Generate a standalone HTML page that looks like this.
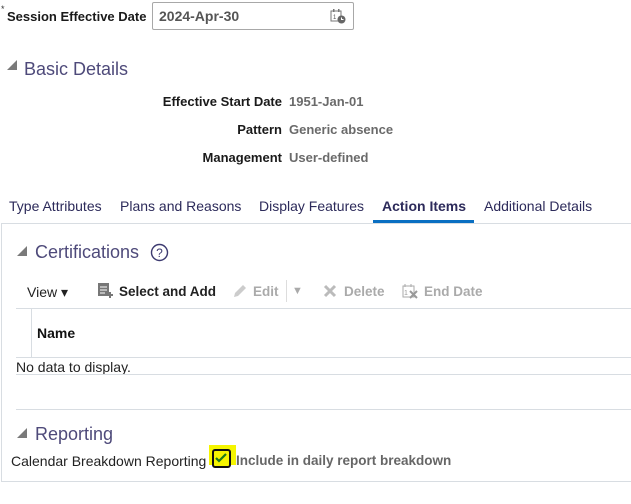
<!DOCTYPE html>
<html><head><meta charset="utf-8"><style>
body{margin:0;width:631px;height:504px;background:#fff;position:relative;overflow:hidden;font-family:"Liberation Sans",sans-serif;}
.a{position:absolute;white-space:nowrap;}
.lab{font-size:13px;font-weight:bold;color:#1a1a1a;}
.val{font-size:13px;font-weight:bold;color:#6a6a6a;}
.h{font-size:18px;color:#4e4a7a;}
.tri{position:absolute;width:0;height:0;border-left:10px solid transparent;border-bottom:10px solid #7a7a7a;}
.tab{font-size:14px;color:#2c2a5a;top:198px;}
.tb{font-size:13.5px;font-weight:bold;top:284px;}
.dis{color:#aaa;}
.line{position:absolute;background:#d8dde2;}
</style></head><body>
<div class="a" style="left:1px;top:4px;font-size:9px;color:#333">*</div>
<div class="a lab" style="left:7px;top:9px;font-size:13px">Session Effective Date</div>
<div class="a" style="left:152px;top:2px;width:200px;height:26px;border:1px solid #a8a8a8;border-radius:2px"></div>
<div class="a" style="left:159px;top:8px;font-size:14px;font-weight:bold;color:#555">2024-Apr-30</div>
<svg class="a" style="left:330px;top:8px" width="16" height="16" viewBox="0 0 16 16"><rect x="1" y="3" width="10" height="10" fill="none" stroke="#777" stroke-width="1"/><rect x="3" y="1" width="1.5" height="3" fill="#777"/><rect x="8" y="1" width="1.5" height="3" fill="#777"/><text x="3" y="11" font-size="6" fill="#555" font-family="Liberation Sans">1</text><circle cx="11.5" cy="11.5" r="4" fill="#666"/><path d="M11.5 9.5v2h2" stroke="#fff" fill="none"/></svg>

<div class="tri" style="left:7px;top:60px"></div>
<div class="a h" style="left:24px;top:59px">Basic Details</div>
<div class="a lab" style="right:349px;top:94px">Effective Start Date</div>
<div class="a val" style="left:289px;top:94px">1951-Jan-01</div>
<div class="a lab" style="right:349px;top:122px">Pattern</div>
<div class="a val" style="left:289px;top:122px">Generic absence</div>
<div class="a lab" style="right:349px;top:150px">Management</div>
<div class="a val" style="left:289px;top:150px">User-defined</div>

<div class="a tab" style="left:9px">Type Attributes</div>
<div class="a tab" style="left:120px">Plans and Reasons</div>
<div class="a tab" style="left:259px">Display Features</div>
<div class="a tab" style="left:382px;font-weight:bold">Action Items</div>
<div class="a tab" style="left:484px">Additional Details</div>
<div class="a" style="left:373px;top:220px;width:101px;height:3px;background:#0a6fc2"></div>
<div class="a" style="left:1px;top:223px;width:640px;height:257px;border:1px solid #d8dde2;border-right:none"></div>

<div class="tri" style="left:17px;top:246px"></div>
<div class="a h" style="left:35px;top:242px">Certifications</div>
<svg class="a" style="left:150px;top:243px" width="19" height="19" viewBox="0 0 19 19"><circle cx="9.5" cy="9.5" r="8" fill="none" stroke="#3c3a70" stroke-width="1.4"/><text x="9.5" y="14" text-anchor="middle" font-size="12" fill="#3c3a70" font-family="Liberation Sans">?</text></svg>

<div class="a tb" style="left:27px;font-weight:normal;color:#222;font-size:14px">View ▾</div>
<svg class="a" style="left:97px;top:282px" width="17" height="17" viewBox="0 0 17 17"><rect x="1" y="1" width="11" height="13" fill="#777"/><path d="M3 5h7M3 8h7M3 11h5" stroke="#fff"/><path d="M13 10v6M10 13h6" stroke="#777" stroke-width="2"/></svg>
<div class="a tb" style="left:119px;color:#222">Select and Add</div>
<svg class="a" style="left:232px;top:283px" width="16" height="16" viewBox="0 0 16 16"><path d="M2 14l1-4 8-8 3 3-8 8z" fill="#ccc"/></svg>
<div class="a tb dis" style="left:253px">Edit</div>
<div class="a" style="left:286px;top:280px;width:1px;height:22px;background:#ddd"></div>
<div class="a dis" style="left:292px;top:285px;font-size:11px">▼</div>
<svg class="a" style="left:322px;top:283px" width="16" height="16" viewBox="0 0 16 16"><path d="M3 3l10 10M13 3L3 13" stroke="#bbb" stroke-width="3"/></svg>
<div class="a tb dis" style="left:344px">Delete</div>
<svg class="a" style="left:402px;top:283px" width="17" height="16" viewBox="0 0 17 16"><rect x="1" y="3" width="11" height="11" fill="none" stroke="#aaa"/><path d="M3 1v3M9 1v3" stroke="#aaa"/><text x="2" y="12" font-size="7" fill="#999" font-family="Liberation Sans">1</text><path d="M8 8l7 7M15 8l-7 7" stroke="#999" stroke-width="2"/></svg>
<div class="a tb dis" style="left:424px">End Date</div>

<div class="line" style="left:16px;top:308px;width:620px;height:1px"></div>
<div class="line" style="left:31px;top:308px;width:1px;height:49px"></div>
<div class="a" style="left:37px;top:325px;font-size:14px;font-weight:bold;color:#111">Name</div>
<div class="line" style="left:16px;top:357px;width:620px;height:1px"></div>
<div class="a" style="left:16px;top:359px;font-size:14px;color:#222">No data to display.</div>
<div class="line" style="left:16px;top:374px;width:620px;height:1px"></div>
<div class="line" style="left:16px;top:409px;width:620px;height:1px"></div>

<div class="tri" style="left:17px;top:428px"></div>
<div class="a h" style="left:35px;top:424px">Reporting</div>
<div class="a" style="left:11px;top:453px;font-size:14px;color:#222">Calendar Breakdown Reporting</div>
<div class="a" style="left:209px;top:445px;width:27px;height:20px;background:#f5f500"></div>
<div class="a" style="left:212px;top:449px;width:15px;height:15px;border:2px solid #111;border-radius:3px;background:#f5f500"></div>
<svg class="a" style="left:214px;top:451px" width="14" height="14" viewBox="0 0 14 14"><path d="M2 7l3 3 7-7" stroke="#1a7a1a" stroke-width="2.2" fill="none"/></svg>
<div class="a" style="left:236px;top:453px;font-size:13.5px;font-weight:bold;color:#666">Include in daily report breakdown</div>
</body></html>
